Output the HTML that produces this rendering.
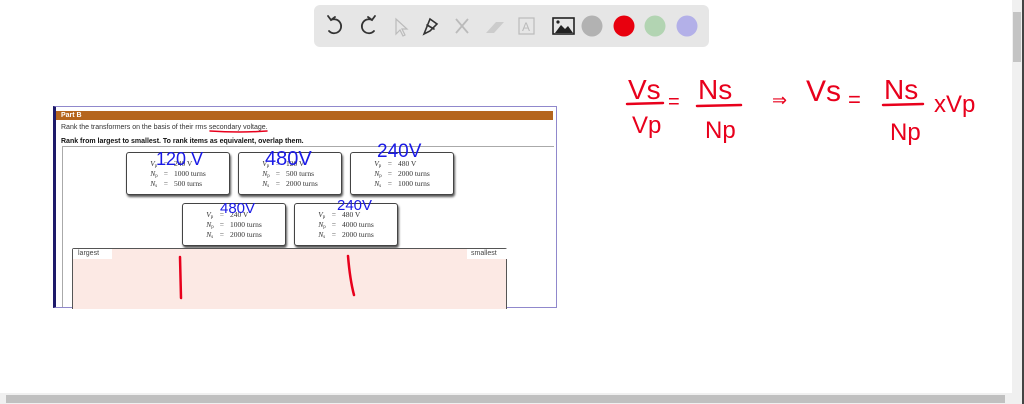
<!DOCTYPE html>
<html><head><meta charset="utf-8"><style>
body{margin:0;width:1024px;height:404px;background:#fff;position:relative;overflow:hidden;font-family:"Liberation Sans",sans-serif}
.a{position:absolute}
.tb{left:314px;top:5px;width:395px;height:42px;background:#e6e6e6;border-radius:6px}
.box{position:absolute;width:102px;height:41px;border:1px solid #444;border-radius:3px;background:#fff;box-shadow:1px 2px 2px #555;font-family:"Liberation Serif",serif;font-size:7.5px;line-height:10px;color:#333}
.box table{border-collapse:collapse;margin:6px auto 0}
.box td{padding:0 3px;height:10px;line-height:10px}
.box sub{font-size:5px;line-height:0;vertical-align:-1px}
</style></head><body>
<div class="a tb"></div>
<svg class="a" style="left:314px;top:5px" width="395" height="42" viewBox="0 0 395 42">
 <g fill="none" stroke="#333" stroke-width="1.8" stroke-linecap="round">
  <path d="M17 15 A7 7 0 1 1 15 26"/><path d="M14 11 L17 15 L21 12"/>
  <path d="M58 15 A7 7 0 1 0 60 26"/><path d="M61 11 L58 15 L54 12"/>
  <path d="M110 29 L116 14 L123 19 L116 26 L110 29 Z M113 20 L120 24" stroke-width="1.6"/>
 </g>
 <path d="M82 14 L82 29 L86 25 L89 31 L91 30 L88 24 L93 24 Z" fill="none" stroke="#bbb" stroke-width="1.2"/>
 <path d="M142 14 L154 28 M154 14 L142 28" stroke="#bbb" stroke-width="1.8"/>
 <path d="M172 28 L182 17 L190 17 L180 28 Z" fill="#ccc"/>
 <rect x="205" y="13" width="15" height="16" fill="none" stroke="#bbb" stroke-width="1.2"/>
 <text x="208" y="26" font-size="12" fill="#bbb" font-family="Liberation Sans">A</text>
 <rect x="239" y="13" width="21" height="16" fill="none" stroke="#222" stroke-width="1.6"/>
 <path d="M241 28 L247 20 L251 24 L254 21 L259 28 Z" fill="#222"/><circle cx="244" cy="17" r="1.6" fill="#222"/>
 <circle cx="278" cy="21" r="10.5" fill="#b2b2b2"/>
 <circle cx="310" cy="21" r="10.5" fill="#e8000e"/>
 <circle cx="341" cy="21" r="10.5" fill="#b2d4b2"/>
 <circle cx="373" cy="21" r="10.5" fill="#b3b0e8"/>
</svg>

<div class="a" style="left:53px;top:106px;width:500px;height:200px;border:1px solid #9088cc;border-left:3px solid #1e1a6a"></div>
<div class="a" style="left:56px;top:111px;width:492px;height:9px;background:#b5651d;color:#fff;font-size:7px;font-weight:bold;line-height:9px;padding-left:5px">Part B</div>
<div class="a" style="left:61px;top:124px;font-size:7px;color:#333">Rank the transformers on the basis of their rms secondary voltage.</div>
<div class="a" style="left:61px;top:138px;font-size:7px;color:#111;font-weight:bold">Rank from largest to smallest. To rank items as equivalent, overlap them.</div>
<div class="a" style="left:62px;top:146px;width:491px;height:160px;border-top:1px solid #aaa;border-left:1px solid #aaa"></div>

<div class="box" style="left:126px;top:152px"><table><tr><td><i>V</i><sub>p</sub></td><td>=</td><td>240 V</td></tr><tr><td><i>N</i><sub>p</sub></td><td>=</td><td>1000 turns</td></tr><tr><td><i>N</i><sub>s</sub></td><td>=</td><td>500 turns</td></tr></table></div>
<div class="box" style="left:238px;top:152px"><table><tr><td><i>V</i><sub>p</sub></td><td>=</td><td>120 V</td></tr><tr><td><i>N</i><sub>p</sub></td><td>=</td><td>500 turns</td></tr><tr><td><i>N</i><sub>s</sub></td><td>=</td><td>2000 turns</td></tr></table></div>
<div class="box" style="left:350px;top:152px"><table><tr><td><i>V</i><sub>p</sub></td><td>=</td><td>480 V</td></tr><tr><td><i>N</i><sub>p</sub></td><td>=</td><td>2000 turns</td></tr><tr><td><i>N</i><sub>s</sub></td><td>=</td><td>1000 turns</td></tr></table></div>
<div class="box" style="left:182px;top:203px"><table><tr><td><i>V</i><sub>p</sub></td><td>=</td><td>240 V</td></tr><tr><td><i>N</i><sub>p</sub></td><td>=</td><td>1000 turns</td></tr><tr><td><i>N</i><sub>s</sub></td><td>=</td><td>2000 turns</td></tr></table></div>
<div class="box" style="left:294px;top:203px"><table><tr><td><i>V</i><sub>p</sub></td><td>=</td><td>480 V</td></tr><tr><td><i>N</i><sub>p</sub></td><td>=</td><td>4000 turns</td></tr><tr><td><i>N</i><sub>s</sub></td><td>=</td><td>2000 turns</td></tr></table></div>

<div class="a" style="left:72px;top:248px;width:433px;height:60px;background:#fce9e4;border:1px solid #555;border-bottom:none;border-radius:2px 2px 0 0"></div>
<div class="a" style="left:73px;top:249px;width:34px;height:10px;background:#fff;font-size:7px;color:#444;line-height:10px;padding-left:5px">largest</div>
<div class="a" style="left:467px;top:249px;width:37px;height:10px;background:#fff;font-size:7px;color:#444;line-height:10px;padding-left:4px">smallest</div>

<div class="a" style="left:1012px;top:0;width:10px;height:393px;background:#f0f0f0"></div>
<div class="a" style="left:1013px;top:12px;width:8px;height:50px;background:#c4c4c4"></div>
<div class="a" style="left:1022px;top:0;width:2px;height:404px;background:#444"></div>
<div class="a" style="left:0;top:393px;width:1022px;height:11px;background:#f0f0f0"></div>
<div class="a" style="left:6px;top:395px;width:999px;height:8px;background:#c0c0c0"></div>

<svg class="a" style="left:0;top:0" width="1024" height="404">
 <g fill="#e8001c" font-family="Liberation Sans">
  <text x="628" y="99" font-size="28">Vs</text>
  <text x="632" y="133" font-size="24">Vp</text>
  <text x="668" y="108" font-size="20">=</text>
  <text x="698" y="99" font-size="28">Ns</text>
  <text x="705" y="138" font-size="24">Np</text>
  <text x="772" y="106" font-size="18">⇒</text>
  <text x="806" y="101" font-size="30">Vs</text>
  <text x="848" y="107" font-size="22">=</text>
  <text x="884" y="99" font-size="28">Ns</text>
  <text x="890" y="140" font-size="24">Np</text>
  <text x="934" y="112" font-size="24">xVp</text>
 </g>
 <g stroke="#e8001c" stroke-width="2.5" stroke-linecap="round" fill="none">
  <path d="M627 104 L663 103"/><path d="M697 106 L741 105"/><path d="M883 105 L923 104"/>
  <path d="M180 257 L181 298"/><path d="M348 256 Q350 280 354 295"/>
  <path d="M210 131 Q240 133 267 131" stroke-width="1.5"/>
 </g>
 <g fill="#1a1ae6" font-family="Liberation Sans">
  <text x="156" y="165" font-size="18">120 V</text>
  <text x="265" y="165" font-size="20">480V</text>
  <text x="377" y="157" font-size="19">240V</text>
  <text x="220" y="213" font-size="15">480V</text>
  <text x="337" y="210" font-size="15">240V</text>
 </g>
</svg>
</body></html>
